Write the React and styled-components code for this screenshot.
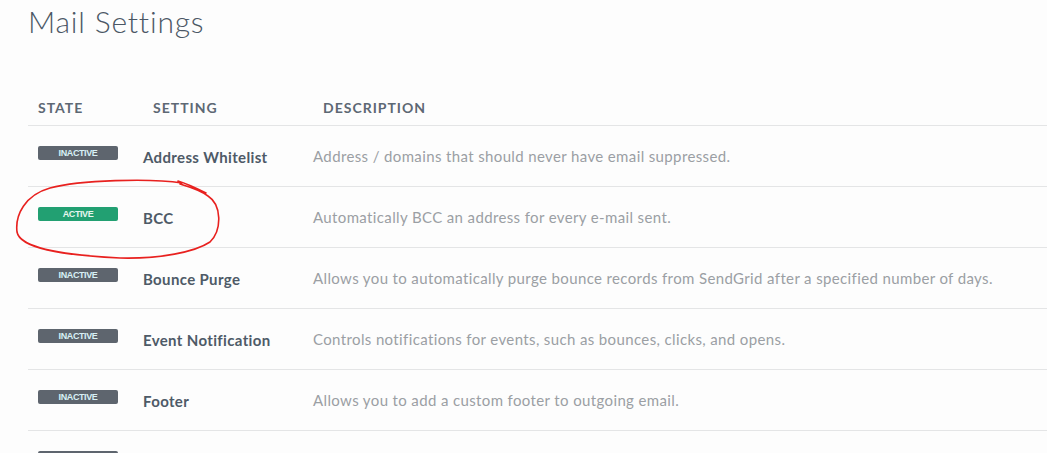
import styled, { createGlobalStyle } from "styled-components";

const GlobalStyle = createGlobalStyle`
  html, body {
    margin: 0;
    padding: 0;
    background: #fdfdfd;
    font-family: "Lato", "Liberation Sans", sans-serif;
    overflow: hidden;
  }
`;

const Page = styled("div")`
  position: relative;
  padding-left: 28px;
  height: 453px;
  overflow: hidden;
`;

const Title = styled("h1")`
  margin: 0;
  padding-top: 3px;
  font-size: 30px;
  line-height: 36px;
  font-weight: 300;
  color: #4b5765;
  letter-spacing: 0.8px;
`;

const Table = styled("div")`
  margin-top: 50px;
`;

const Row = styled("div")`
  display: grid;
  grid-template-columns: 115px 170px 1fr;
  align-items: center;
  height: ${(p) => (p.$head ? "36px" : "60px")};
  border-bottom: 1px solid #e4e5e6;
`;

const HeadCell = styled("div")`
  padding-left: 10px;
  font-size: 14px;
  font-weight: 700;
  color: #5d6874;
  letter-spacing: 1px;
`;

const StateCell = styled("div")`
  padding-left: 10px;
  align-self: start;
  padding-top: 20px;
`;

const Badge = styled("span")`
  display: block;
  width: 80px;
  height: 14px;
  line-height: 14px;
  border-radius: 2px;
  text-align: center;
  font-size: 9px;
  font-weight: 700;
  font-family: "Liberation Sans", sans-serif;
  letter-spacing: -0.4px;
  background: ${(p) => (p.$active ? "#22a072" : "#5e656e")};
  color: ${(p) => (p.$active ? "#e6f7ef" : "#d8f1f6")};
`;

const Name = styled("div")`
  padding-top: 2px;
  font-size: 15px;
  font-weight: 700;
  color: #4e5a67;
  letter-spacing: 0.35px;
`;

const Desc = styled("div")`
  font-size: 15px;
  color: #9b9fa4;
  white-space: nowrap;
  letter-spacing: 0.37px;
`;

const Scribble = styled("svg")`
  position: absolute;
  left: 0;
  top: 0;
  pointer-events: none;
`;

const settings = [
  { name: "Address Whitelist", desc: "Address / domains that should never have email suppressed.", active: false },
  { name: "BCC", desc: "Automatically BCC an address for every e-mail sent.", active: true },
  { name: "Bounce Purge", desc: "Allows you to automatically purge bounce records from SendGrid after a specified number of days.", active: false },
  { name: "Event Notification", desc: "Controls notifications for events, such as bounces, clicks, and opens.", active: false },
  { name: "Footer", desc: "Allows you to add a custom footer to outgoing email.", active: false },
  { name: "Forward Spam", desc: "Allows you to specify an email address to which spam reports will be forwarded.", active: false },
];

export default function App() {
  return (
    <>
      <GlobalStyle />
      <Page>
        <Title>Mail Settings</Title>
        <Table>
          <Row $head>
            <HeadCell>STATE</HeadCell>
            <HeadCell>SETTING</HeadCell>
            <HeadCell>DESCRIPTION</HeadCell>
          </Row>
          {settings.map((s) => (
            <Row key={s.name}>
              <StateCell>
                <Badge $active={s.active}>{s.active ? "ACTIVE" : "INACTIVE"}</Badge>
              </StateCell>
              <Name>{s.name}</Name>
              <Desc>{s.desc}</Desc>
            </Row>
          ))}
        </Table>
        <Scribble width="260" height="270">
          <path
            d="M182 183 C150 178, 80 180, 50 188 C25 195, 15 215, 17 232 C20 248, 60 255, 120 258 C160 259, 195 252, 210 242 C222 230, 222 205, 208 196 C200 190, 190 187, 180 184 M178 181 C188 184, 198 189, 206 193"
            fill="none"
            stroke="#e8211f"
            strokeWidth="1.6"
            strokeLinecap="round"
          />
        </Scribble>
      </Page>
    </>
  );
}
